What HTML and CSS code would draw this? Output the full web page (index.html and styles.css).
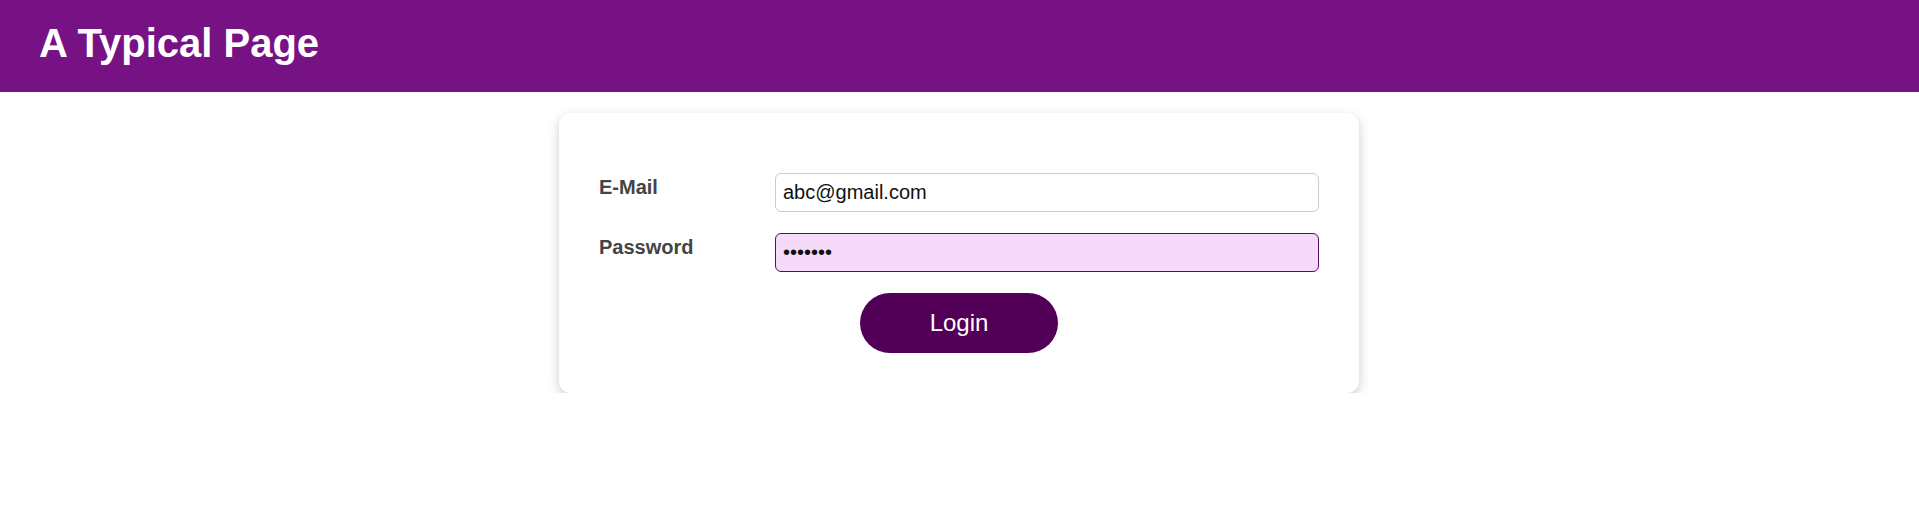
FILE: index.html
```html
<!DOCTYPE html>
<html lang="en">
<head>
<meta charset="utf-8">
<title>A Typical Page</title>
<link rel="stylesheet" href="styles.css">
</head>
<body>
<header class="site-header">
  <h1 class="site-title">A Typical Page</h1>
</header>
<main class="main">
  <form class="login-card">
    <div class="form-row">
      <label class="form-label" for="email">E-Mail</label>
      <input class="form-input" id="email" type="text" value="abc@gmail.com">
    </div>
    <div class="form-row">
      <label class="form-label" for="password">Password</label>
      <input class="form-input form-input-active" id="password" type="password" value="1234567">
    </div>
    <div class="form-actions">
      <button class="login-button" type="button">Login</button>
    </div>
  </form>
</main>
</body>
</html>
```
FILE: styles.css
```css
html, body {
  margin: 0;
  padding: 0;
  background: #ffffff;
  font-family: "Liberation Sans", Arial, sans-serif;
}

.site-header {
  background: #771285;
  height: 92px;
  box-sizing: border-box;
  padding: 20px 39px 0;
}

.site-title {
  margin: 0;
  color: #ffffff;
  font-size: 40px;
  font-weight: bold;
  line-height: 46px;
}

.main {
  display: flex;
  justify-content: center;
  padding-top: 21px;
  padding-right: 1px;
}

.login-card {
  width: 800px;
  box-sizing: border-box;
  padding: 60px 40px 40px;
  background: #ffffff;
  border-radius: 12px;
  box-shadow: 0 4px 12px rgba(0, 0, 0, 0.2);
  display: flex;
  flex-direction: column;
  gap: 21px;
}

.form-row {
  display: grid;
  grid-template-columns: 176px 1fr;
  align-items: start;
}

.form-label {
  color: #444444;
  font-size: 20px;
  font-weight: bold;
  line-height: 23px;
  padding-top: 3px;
}

.form-input {
  height: 39px;
  box-sizing: border-box;
  padding: 7px 7px;
  border: 1px solid #cccccc;
  border-radius: 6px;
  font-family: "Liberation Sans", Arial, sans-serif;
  font-size: 20px;
  line-height: 23px;
  color: #111111;
  background: #ffffff;
  outline: none;
  width: 100%;
}

.form-input-active {
  background: #f5dafa;
  border-color: #5a0a60;
}

.form-actions {
  display: flex;
  justify-content: center;
}

.login-button {
  width: 198px;
  height: 60px;
  border: none;
  border-radius: 30px;
  background: #520057;
  color: #ffffff;
  font-family: "Liberation Sans", Arial, sans-serif;
  font-size: 24px;
  cursor: pointer;
}
```
